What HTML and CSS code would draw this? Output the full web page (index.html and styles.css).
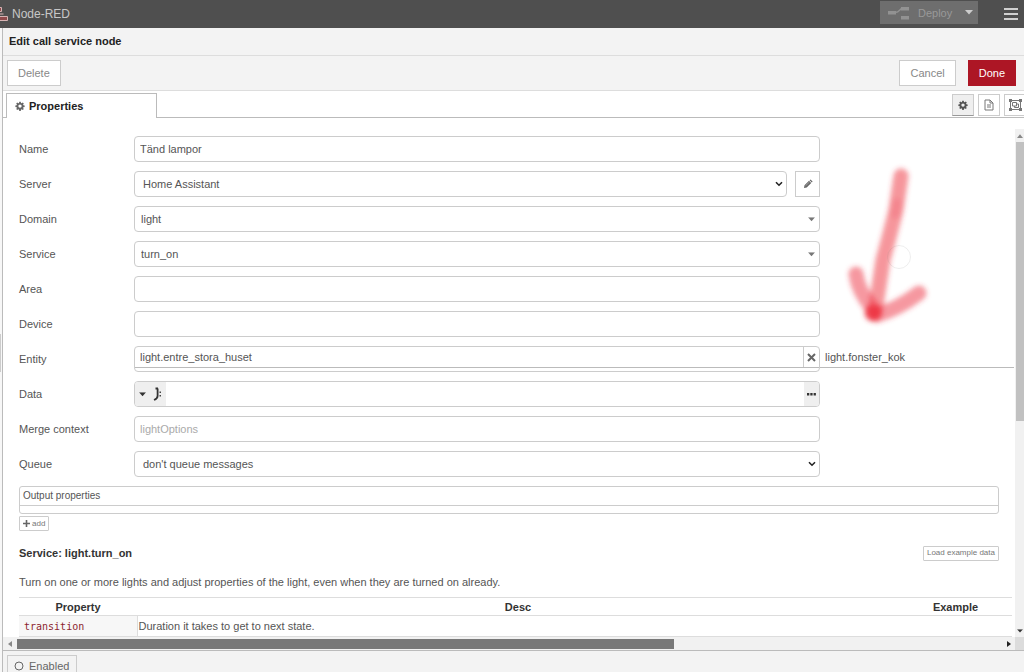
FILE: index.html
```html
<!DOCTYPE html>
<html lang="en">
<head>
<meta charset="utf-8">
<title>Node-RED</title>
<link rel="stylesheet" href="styles.css">
</head>
<body>
<svg class="defs" aria-hidden="true">
  <symbol id="gear" viewBox="0 0 16 16"><path fill-rule="evenodd" d="M6.8 1h2.4l.4 2 1.1.5 1.700-1.200 1.700 1.700-1.200 1.700.5 1.100 2 .4v2.400l-2 .4-.5 1.100 1.200 1.700-1.700 1.700-1.700-1.200-1.100.5-.4 2H6.800l-.4-2-1.100-.5-1.700 1.200-1.700-1.700 1.200-1.700-.5-1.100-2-.4V7.200l2-.4.5-1.100L1.900 4l1.700-1.700 1.700 1.200L6.400 3zM8 5.400a2.700 2.700 0 1 0 0 5.400 2.700 2.700 0 0 0 0-5.400z"/></symbol>
  <symbol id="chevron" viewBox="0 0 8 6"><path d="M1 1.200l3 3 3-3" fill="none" stroke="#222" stroke-width="1.600"/></symbol>
  <symbol id="caret" viewBox="0 0 8 5"><path d="M0 0h8L4 4.500z"/></symbol>
</svg>
<header class="header">
  <svg class="logo" width="8" height="16" viewBox="0 0 8 16"><g fill="#8f4a4c" stroke="#d8b4b4"><path d="M-3 1.500h4.500v4H-3zM-3 10.500H7.500v4H-3z"/></g><path d="M0 8h3.500" stroke="#d8b4b4" fill="none"/></svg>
  <span class="brand">Node-RED</span>
  <button class="deploy" type="button">
    <svg width="22" height="14" viewBox="0 0 22 14"><path d="M7 6.500c6 0 3-4 8-4" fill="none" stroke="#929292" stroke-width="1.400"/><g fill="#929292"><path d="M0 5h8v3.500H0zM13 1h8v3.500h-8zM13 10h8v3.500h-8z"/></g></svg>
    <span>Deploy</span>
    <svg class="deploy-caret" width="8" height="5"><use href="#caret"/></svg>
  </button>
  <button class="menu" type="button" aria-label="Menu"><svg width="14" height="12" viewBox="0 0 14 12"><path d="M0 1h14M0 6h14M0 11h14" stroke="#d0d0d0" stroke-width="2"/></svg></button>
</header>
<div class="workspace">
  <div class="gutter"></div>
  <main class="tray">
    <h1 class="title">Edit call service node</h1>
    <div class="toolbar">
      <button class="btn" type="button">Delete</button>
      <span class="spacer"></span>
      <button class="btn" type="button">Cancel</button>
      <button class="btn primary" type="button">Done</button>
    </div>
    <div class="tabs">
      <button class="tab" type="button"><svg width="10" height="10" fill="#666"><use href="#gear"/></svg>Properties</button>
      <div class="tab-tools">
        <button class="tool active" type="button" aria-label="Properties"><svg width="10" height="10" fill="#555"><use href="#gear"/></svg></button>
        <button class="tool" type="button" aria-label="Description"><svg width="10" height="12" viewBox="0 0 10 12" fill="none" stroke="#777"><path d="M1 1h5l3 3v7H1zM6 1v3h3M3 6h4M3 8h4"/></svg></button>
        <button class="tool" type="button" aria-label="Appearance"><svg width="13" height="12" viewBox="0 0 13 12" fill="none" stroke="#777"><path d="M1.500 1.500h10v9h-10zM3.500 3.500h4v3.500h-4zM7.500 5h2v3.500h-4V7"/><path fill="#777" stroke="none" d="M0 0h3v3H0zM10 0h3v3h-3zM0 9h3v3H0zM10 9h3v3h-3z"/></svg></button>
      </div>
    </div>
    <div class="scroller">
      <form class="form">
        <div class="row"><label for="name">Name</label><input class="field" id="name" value="Tänd lampor"></div>
        <div class="row"><label for="server">Server</label>
          <div class="pair">
            <div class="select"><select class="field" id="server"><option>Home Assistant</option></select><svg class="mark" width="8" height="6"><use href="#chevron"/></svg></div>
            <button class="edit" type="button" aria-label="Edit server"><svg width="10" height="10" viewBox="0 0 10 10"><path d="M1 9l.5-2.700L6 1.800 8.200 4 3.700 8.500zM6.600 1.200L7.500.4l2.100 2.100-.8.900z" fill="#666"/><path d="M2.500 6.800L6.500 3" stroke="#bbb" stroke-width=".7"/></svg></button>
          </div>
        </div>
        <div class="row"><label for="domain">Domain</label><div class="select"><input class="field" id="domain" value="light"><svg class="mark small" width="7" height="5" viewBox="0 0 8 5"><use href="#caret" fill="#777"/></svg></div></div>
        <div class="row"><label for="service">Service</label><div class="select"><input class="field" id="service" value="turn_on"><svg class="mark small" width="7" height="5" viewBox="0 0 8 5"><use href="#caret" fill="#777"/></svg></div></div>
        <div class="row"><label for="area">Area</label><input class="field" id="area"></div>
        <div class="row"><label for="device">Device</label><input class="field" id="device"></div>
        <div class="row"><span>Entity</span>
          <div class="field entity"><div class="entity-item"><span>light.entre_stora_huset</span><button type="button" aria-label="Remove"><svg width="9" height="9" viewBox="0 0 9 9"><path d="M1 1l7 7M8 1L1 8" stroke="#666" stroke-width="2"/></svg></button></div></div>
          <div class="entity-more">light.fonster_kok</div>
        </div>
        <div class="row"><label for="data">Data</label>
          <div class="field typed">
            <button class="type" type="button" aria-label="JSONata"><svg width="7" height="5" viewBox="0 0 8 5"><use href="#caret" fill="#333"/></svg><svg width="9" height="14" viewBox="0 0 9 14"><path d="M2.500 1.500h2.500M4.600 1.500v7.500Q4.600 11.500 1 13" fill="none" stroke="#333" stroke-width="1.800"/><path d="M6.500 4.500H8v1.500H6.500zM6.500 8H8v1.500H6.500z" fill="#444"/></svg></button>
            <input id="data">
            <button class="more" type="button" aria-label="Expand"><svg width="9" height="3" viewBox="0 0 9 3"><path d="M0 0h2.300v2.500H0zM3.300 0h2.300v2.500H3.300zM6.600 0h2.300v2.500H6.600z" fill="#333"/></svg></button>
          </div>
        </div>
        <div class="row"><label for="merge">Merge context</label><input class="field" id="merge" placeholder="lightOptions"></div>
        <div class="row"><label for="queue">Queue</label><div class="select"><select class="field" id="queue"><option>don't queue messages</option></select><svg class="mark" width="8" height="6"><use href="#chevron"/></svg></div></div>
        <section class="outputs"><div class="outputs-head">Output properties</div></section>
        <button class="mini add" type="button"><svg width="7" height="7" viewBox="0 0 7 7"><path d="M0 3.500h7M3.500 0v7" stroke="#666" stroke-width="1.600"/></svg>add</button>
        <div class="service-head"><h2>Service: light.turn_on</h2><button class="mini" type="button">Load example data</button></div>
        <p class="desc">Turn on one or more lights and adjust properties of the light, even when they are turned on already.</p>
        <table>
          <thead><tr><th class="prop">Property</th><th>Desc</th><th class="example">Example</th></tr></thead>
          <tbody><tr><td class="key"><code>transition</code></td><td>Duration it takes to get to next state.</td><td></td></tr></tbody>
        </table>
        <svg class="arrow" width="120" height="180" viewBox="820 150 120 180" aria-hidden="true">
          <defs><filter id="soft" x="-20%" y="-20%" width="140%" height="140%"><feGaussianBlur stdDeviation="2.600"/></filter></defs>
          <g fill="none" stroke="#ee3342" stroke-linecap="round" stroke-linejoin="round" filter="url(#soft)">
            <path d="M901 176L896 210Q889 238 883 260L875 312" stroke-width="15" opacity=".52"/>
            <path d="M897 203L895 214" stroke-width="10" opacity=".15"/>
            <path d="M856 274Q858 291 873 309" stroke-width="15" opacity=".5"/>
            <path d="M919 293Q898 309 877 315" stroke-width="15" opacity=".5"/>
            <path d="M873 313h.1" stroke-width="17" opacity=".8"/>
          </g>
          <circle cx="899" cy="257" r="11.500" fill="none" stroke="#777" stroke-opacity=".12"/>
        </svg>
      </form>
      <div class="vbar"><svg width="6" height="4" viewBox="0 0 8 5"><path d="M0 5h8L4 0z" fill="#888"/></svg><div class="vthumb"></div><span class="spacer"></span><svg width="6" height="4" viewBox="0 0 8 5"><use href="#caret" fill="#333"/></svg></div>
    </div>
    <div class="hbar"><div class="htrack"><svg width="4" height="6" viewBox="0 0 4 6"><path d="M4 0v6L0 3z" fill="#888"/></svg><div class="hthumb"></div><span class="spacer"></span><svg width="4" height="6" viewBox="0 0 4 6"><path d="M0 0v6l4-3z" fill="#222"/></svg></div><div class="corner"></div></div>
    <footer class="footer"><button class="enabled" type="button"><svg width="10" height="10" viewBox="0 0 10 10"><circle cx="5" cy="5" r="4" fill="none" stroke="#666"/></svg>Enabled</button></footer>
  </main>
</div>
</body>
</html>
```
FILE: styles.css
```css
* { box-sizing: border-box; }
body { margin: 0; height: 100vh; display: flex; flex-direction: column; overflow: hidden; background: #fff; color: #555; font: 11px/16px "Liberation Sans", Arial, sans-serif; }
button, input, select { font: inherit; color: inherit; }
button { display: flex; align-items: center; justify-content: center; padding: 0; border: 1px solid #ccc; background: #fff; }
svg { flex: none; display: block; }
h1, h2, p { margin: 0; }
.defs { position: absolute; width: 0; height: 0; }
.spacer { flex: 1; }

.header { flex: none; display: flex; align-items: center; height: 28px; padding-right: 6px; background: #4f4f4f; }
.brand { margin-left: 4px; flex: 1; font-size: 12px; color: #c7c7c7; }
.deploy { width: 98px; height: 23px; margin-bottom: 3px; padding: 0 5px 0 8px; gap: 8px; border: 0; background: #6e6e6e; color: #999; }
.deploy-caret { margin-left: auto; fill: #ccc; }
.menu { margin-left: 26px; width: 14px; height: 26px; border: 0; background: none; }

.workspace { flex: 1; min-height: 0; display: flex; }
.gutter { flex: none; width: 3px; background: linear-gradient(#ccc, #ccc) 0 306px / 1px 38px no-repeat #f7f7f7; border-right: 1px solid #bbb; }
.tray { flex: 1; min-width: 0; display: flex; flex-direction: column; }
.title { height: 28px; padding-left: 6px; font-size: 11px; line-height: 27px; color: #222; background: #f3f3f3; border-bottom: 1px solid #ddd; }
.toolbar { display: flex; align-items: center; gap: 12px; height: 35px; padding: 0 8px 0 4px; background: #f3f3f3; border-bottom: 1px solid #ddd; }
.btn { height: 26px; padding: 0 10px; color: #888; }
.btn.primary { background: #ad1625; border-color: #ad1625; color: #fff; }

.tabs { flex: none; display: flex; justify-content: space-between; align-items: flex-end; height: 27px; padding-left: 3px; border-bottom: 1px solid #bbb; }
.tab { width: 151px; height: 25px; margin-bottom: -1px; padding-left: 8px; gap: 4px; justify-content: flex-start; border: 1px solid #bbb; border-bottom: 0; font-weight: bold; color: #222; }
.tab-tools { display: flex; gap: 4px; margin-bottom: 1px; }
.tool { width: 22px; height: 22px; }
.tool:last-child { width: 20px; justify-content: flex-start; padding-left: 4px; border-right: 0; }
.tool.active { background: #efefef; border-bottom-color: #999; }

.scroller { flex: 1; min-height: 0; display: flex; padding-top: 11px; overflow: hidden; }
.form { position: relative; flex: 1; min-width: 0; padding: 7px 16px 0; }
.row { display: grid; grid-template-columns: 115px 70% 1fr; align-items: center; height: 26px; margin-bottom: 9px; }
.row > label, .row > span { padding-bottom: 1px; }
.field { width: 100%; min-width: 0; height: 26px; padding: 0 5px; border: 1px solid #ccc; border-radius: 4px; background: #fff; outline: 0; }
.field::placeholder { color: #aaa; opacity: 1; }
select.field { appearance: none; padding-left: 8px; }
.select { position: relative; flex: 1; }
.select input { padding-left: 6px; }
.mark { position: absolute; right: 4px; top: 10px; }
.mark.small { right: 5px; top: 11px; }
.pair { display: flex; gap: 8px; }
.edit { width: 25px; height: 26px; }
.entity { padding: 0; }
.entity-item { display: flex; height: 21px; border-bottom: 1px solid #bbb; }
.entity-item span { flex: 1; padding-left: 5px; line-height: 20px; }
.entity-item button { width: 16px; border-width: 0 0 0 1px; background: none; }
.entity-more { align-self: start; height: 22px; margin-right: -15px; padding-left: 5px; line-height: 22px; border-bottom: 1px solid #bbb; }
.typed { display: flex; padding: 0; overflow: hidden; }
.typed input { flex: 1; min-width: 0; border: 0; outline: 0; }
.type { width: 31px; gap: 7px; border: 0; background: #efefef; }
.more { width: 15px; border: 0; background: #efefef; }

.outputs { height: 28px; border: 1px solid #ccc; border-radius: 3px; }
.outputs-head { height: 19px; padding-left: 3px; font-size: 10px; line-height: 18px; border-bottom: 1px solid #ccc; }
.mini { height: 15px; padding: 0 3px; font-size: 8px; line-height: 8px; color: #777; border-radius: 1px; }
.add { margin-top: 2px; gap: 2px; }
.service-head { display: flex; justify-content: space-between; align-items: center; height: 16px; margin-top: 14px; }
h2 { font-size: 11px; color: #333; }
.desc { margin-top: 13px; }
table { width: calc(100% + 13px); margin-top: 7px; border-collapse: collapse; table-layout: fixed; }
th, td { height: 18px; padding: 0 1px; border-top: 1px solid #ddd; border-bottom: 1px solid #ddd; text-align: left; }
th { text-align: center; color: #333; }
td { height: 21px; }
.prop { width: 118px; }
.example { width: 113px; }
.key { padding-left: 5px; background: #f7f7f7; border-right: 1px solid #ddd; }
code { font: 10px/16px "DejaVu Sans Mono", monospace; color: #8c1f2f; }
.arrow { position: absolute; left: 817px; top: 21px; }

.vbar { flex: none; width: 9px; display: flex; flex-direction: column; align-items: center; padding: 5px 0 4px; background: #f1f1f1; }
.vthumb { align-self: stretch; height: 56%; margin: 4px 0 0 1px; background: #c1c1c1; }
.hbar { flex: none; display: flex; height: 14px; border-bottom: 1px solid #bbb; }
.htrack { flex: 1; display: flex; align-items: center; padding: 0 4px 0 5px; background: #f1f1f1; }
.hthumb { width: 657px; height: 10px; margin-left: 5px; background: #787878; }
.corner { width: 9px; background: #dcdcdc; }
.footer { flex: none; height: 21px; padding: 4px 4px 0; background: #f3f3f3; }
.enabled { height: 21px; padding: 0 7px 0 6px; gap: 5px; background: #f3f3f3; color: #666; }
```
